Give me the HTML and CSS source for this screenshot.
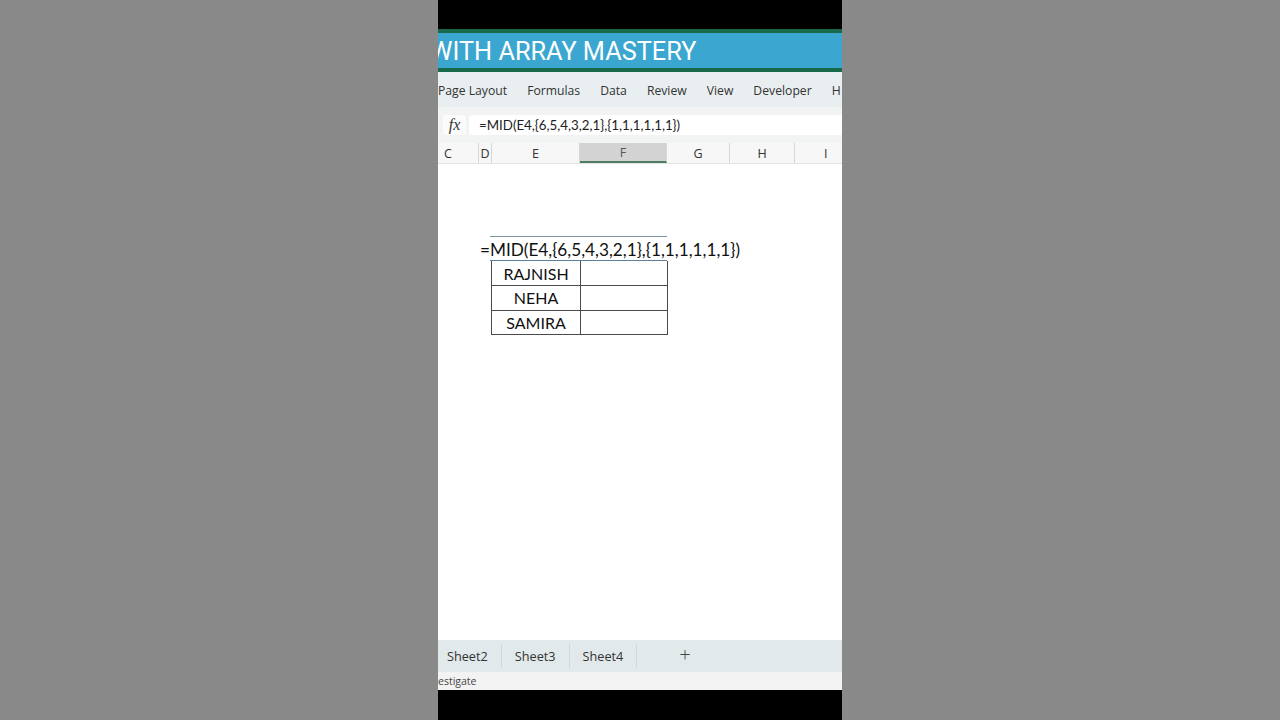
FILE: index.html
```html
<!DOCTYPE html>
<html>
<head>
<meta charset="utf-8">
<link rel="stylesheet" href="styles.css">
</head>
<body>
<div class="phone">
  <div class="black-top"></div>
  <div class="banner"><span class="title">WITH ARRAY MASTERY</span></div>
  <div class="ribbon">
    <span class="tab t1">Page Layout</span>
    <span class="tab">Formulas</span>
    <span class="tab">Data</span>
    <span class="tab">Review</span>
    <span class="tab">View</span>
    <span class="tab">Developer</span>
    <span class="tab">H</span>
  </div>
  <div class="fbar">
    <div class="fx">fx</div>
    <div class="finput">=MID(E4,{6,5,4,3,2,1},{1,1,1,1,1,1})</div>
  </div>
  <div class="cols">
    <div class="ch first">C</div>
    <div class="ch">D</div>
    <div class="ch">E</div>
    <div class="ch sel">F</div>
    <div class="ch">G</div>
    <div class="ch">H</div>
    <div class="ch last">I</div>
  </div>
  <div class="sheet">
    <div class="editrow">
      <span class="formula">=MID(E4,{6,5,4,3,2,1},{1,1,1,1,1,1})</span>
    </div>
    <table class="data">
      <tr><td>RAJNISH</td><td></td></tr>
      <tr><td>NEHA</td><td></td></tr>
      <tr><td>SAMIRA</td><td></td></tr>
    </table>
  </div>
  <div class="sheettabs">
    <span class="stab first">Sheet2</span>
    <span class="stab">Sheet3</span>
    <span class="stab">Sheet4</span>
    <span class="plus">+</span>
  </div>
  <div class="status">estigate</div>
  <div class="black-bottom"></div>
</div>
</body>
</html>
```

FILE: styles.css
```css
html, body {
  margin: 0;
  padding: 0;
  background: #898989;
  height: 720px;
  overflow: hidden;
}
body {
  display: flex;
  justify-content: center;
}
.phone {
  width: 404px;
  height: 720px;
  display: flex;
  flex-direction: column;
  background: #fff;
  overflow: hidden;
}
.black-top {
  height: 29px;
  background: #000;
  flex: none;
}
.banner {
  flex: none;
  height: 35px;
  border-top: 4px solid #17694a;
  border-bottom: 4px solid #17694a;
  background: #3ba6cf;
  display: flex;
  align-items: center;
  overflow: hidden;
}
.title {
  font-family: Roboto, "Liberation Sans", sans-serif;
  font-size: 25.3px;
  color: #fff;
  margin-left: -8px;
  margin-top: 2px;
  white-space: nowrap;
}
.ribbon {
  flex: none;
  height: 35px;
  background: #e9eff0;
  display: flex;
  align-items: center;
  gap: 20px;
  overflow: hidden;
  font-family: "Open Sans", "Noto Sans", sans-serif;
  font-size: 12.2px;
  color: #333;
  white-space: nowrap;
  padding-top: 2px;
  box-sizing: border-box;
}
.fbar {
  flex: none;
  height: 36px;
  background: #f2f4f4;
  display: flex;
  align-items: center;
  padding-left: 5px;
  gap: 3px;
  box-sizing: border-box;
}
.fx {
  width: 23px;
  height: 20px;
  background: #fbfbfb;
  border-radius: 3px;
  font-family: "Liberation Serif", serif;
  font-style: italic;
  font-size: 16px;
  color: #333;
  display: flex;
  align-items: center;
  justify-content: center;
}
.finput {
  flex: 1;
  height: 20px;
  background: #fff;
  border-radius: 3px 0 0 3px;
  font-family: Lato, "Open Sans", sans-serif;
  font-size: 13.3px;
  color: #222;
  display: flex;
  align-items: center;
  padding-left: 10px;
  white-space: nowrap;
}
.cols {
  flex: none;
  height: 20px;
  display: grid;
  grid-template-columns: 41px 13px 88px 87px 63px 65px 47px;
  background: #f7f7f7;
  border-bottom: 1px solid #e3e3e3;
  font-family: "Open Sans", "Noto Sans", sans-serif;
  font-size: 12.5px;
  color: #333;
}
.ch {
  display: flex;
  align-items: center;
  justify-content: center;
  border-right: 1px solid #d7d7d7;
}
.ch.first {
  justify-content: flex-start;
  padding-left: 6px;
}
.ch.last {
  border-right: none;
  justify-content: flex-start;
  padding-left: 29px;
}
.ch.sel {
  background: #d3d3d3;
  border-bottom: 2px solid #4f7d63;
  color: #555;
}
.sheet {
  flex: 1;
  background: #fff;
  padding-top: 72px;
  box-sizing: border-box;
}
.editrow {
  margin-left: 52px;
  width: 177px;
  height: 25px;
  border-top: 1px solid #7c95a3;
  border-bottom: 1px solid #5d7f9a;
  box-sizing: border-box;
  display: flex;
  align-items: center;
}
.formula {
  margin-left: -10px;
  font-family: Lato, "Open Sans", sans-serif;
  font-size: 17.2px;
  color: #111;
  white-space: nowrap;
  line-height: 22px;
  padding-top: 2px;
}
.data {
  margin-left: 53px;
  border-collapse: collapse;
  font-family: Lato, "Open Sans", sans-serif;
  font-size: 16px;
  color: #111;
}
.data td {
  border: 1px solid #4a4a4a;
  border-top: none;
  height: 24.5px;
  padding: 0;
  text-align: center;
  box-sizing: border-box;
}
.data td:first-child { width: 89px; }
.data td:last-child { width: 87px; }
.data tr + tr td { border-top: 1px solid #4a4a4a; }
.sheettabs {
  flex: none;
  height: 32px;
  background: #e1e9eb;
  display: flex;
  align-items: center;
  font-family: "Open Sans", "Noto Sans", sans-serif;
  font-size: 12.7px;
  color: #333;
}
.stab {
  padding: 0 13px;
  border-right: 1px solid #cfd8da;
  line-height: 24px;
}
.stab.first { margin-left: -4px; }
.plus {
  margin-left: 42px;
  font-size: 20px;
  font-weight: 300;
  color: #444;
  line-height: 24px;
  margin-top: -3px;
}
.status {
  flex: none;
  height: 18px;
  background: #f3f3f3;
  font-family: "Open Sans", "Noto Sans", sans-serif;
  font-size: 10.5px;
  color: #444;
  line-height: 18px;
  white-space: nowrap;
}
.black-bottom {
  flex: none;
  height: 30px;
  background: #000;
}
```
